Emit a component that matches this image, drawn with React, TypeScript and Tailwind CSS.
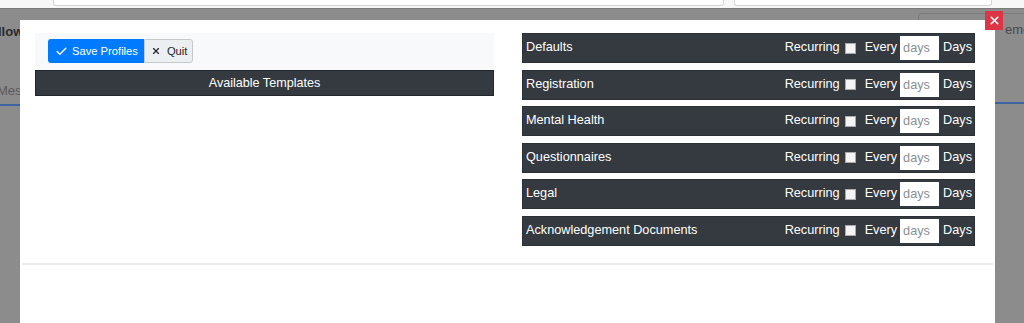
import { Check, X } from "lucide-react";

const rows = [
  "Defaults",
  "Registration",
  "Mental Health",
  "Questionnaires",
  "Legal",
  "Acknowledgement Documents",
];

function TemplateRow({ name }: { name: string }) {
  return (
    <div className="flex h-[30px] items-center border border-[#2b3035] bg-[#343a40] pl-[3px] pr-[2px] text-[12.7px] text-white">
      <span>{name}</span>
      <div className="ml-auto flex items-center">
        <span>Recurring</span>
        <input
          type="checkbox"
          className="ml-[5px] h-[11px] w-[11px] appearance-none border border-[#aaa] bg-[#f4f4f4]"
        />
        <span className="ml-[9px]">Every</span>
        <input
          placeholder="days"
          className="ml-[3px] h-[24px] w-[39px] bg-white px-[3px] text-[12.7px] text-[#495057] outline-none placeholder:text-[#8a8f94]"
        />
        <span className="ml-[4px]">Days</span>
      </div>
    </div>
  );
}

export default function App() {
  return (
    <div
      className="relative h-[323px] w-[1024px] overflow-hidden bg-[#8c8c8c]"
      style={{ fontFamily: '"Liberation Sans", Arial, sans-serif' }}
    >
      {/* page behind the overlay */}
      <div className="flex h-[9px] gap-[10px] border-b border-[#7a7a7a] bg-[#f7f7f7]">
        <div className="ml-[53px] h-[6px] w-[671px] rounded-b-[3px] border-x border-b border-[#d4d4d4] bg-white" />
        <div className="h-[6px] w-[258px] rounded-b-[3px] border-x border-b border-[#d4d4d4] bg-white" />
      </div>
      <div className="flex">
        <div className="w-[20px] overflow-hidden">
          <div className="mt-[13px] -ml-[2px] text-[13px] font-bold text-[#2a2a2a]">llow</div>
          <div className="mt-[39px] -ml-[3px] text-[13px] text-[#5a5a5a]">Mess</div>
          <div className="mt-[4px] h-[2px] bg-[#3d64a0]" />
        </div>
        <div className="flex-1" />
        <div className="w-[106px] overflow-hidden">
          <div className="mt-[4px] h-[89px] rounded-tl-[4px] border-l border-t border-[#7c7c7c] pl-[86px] pt-[6px] text-[13px] text-[#4a4a4a]">
            emo
          </div>
          <div className="h-[2px] bg-[#3d64a0]" />
        </div>
      </div>

      {/* modal */}
      <div className="absolute bottom-0 left-[20px] top-[20px] flex w-[975px] flex-col bg-white">
        <div className="flex gap-[28px] pb-[17px] pl-[15px] pr-[20px] pt-[13px]">
          <div className="w-[459px]">
            <div className="flex h-[37px] bg-[#f8f9fa] pl-[13px] pt-[6px]">
              <div className="flex h-[24px] text-[11.2px]">
                <button className="flex items-center rounded-l-[3px] bg-[#007bff] pl-[7px] pr-[6px] text-white">
                  <Check size={13} strokeWidth={2.5} />
                  <span className="ml-[4px]">Save Profiles</span>
                </button>
                <button className="flex items-center rounded-r-[3px] border border-[#c6c8ca] bg-[#eceff1] pl-[6px] pr-[5px] text-[#212529]">
                  <X size={10} strokeWidth={2.8} />
                  <span className="ml-[6px]">Quit</span>
                </button>
              </div>
            </div>
            <div className="flex h-[26px] items-center justify-center border border-[#23272b] bg-[#343a40] text-[12.6px] text-white">
              Available Templates
            </div>
          </div>
          <div className="flex w-[453px] flex-col gap-[6.5px]">
            {rows.map((r) => (
              <TemplateRow key={r} name={r} />
            ))}
          </div>
        </div>
        <div className="mx-[2px] flex-1 border-t-2 border-[#ececec]" />
      </div>

      {/* close button */}
      <button className="absolute left-[985px] top-[11px] flex h-[19px] w-[18px] items-center justify-center bg-[#dc3545] text-white">
        <X size={13} strokeWidth={3} />
      </button>
    </div>
  );
}
